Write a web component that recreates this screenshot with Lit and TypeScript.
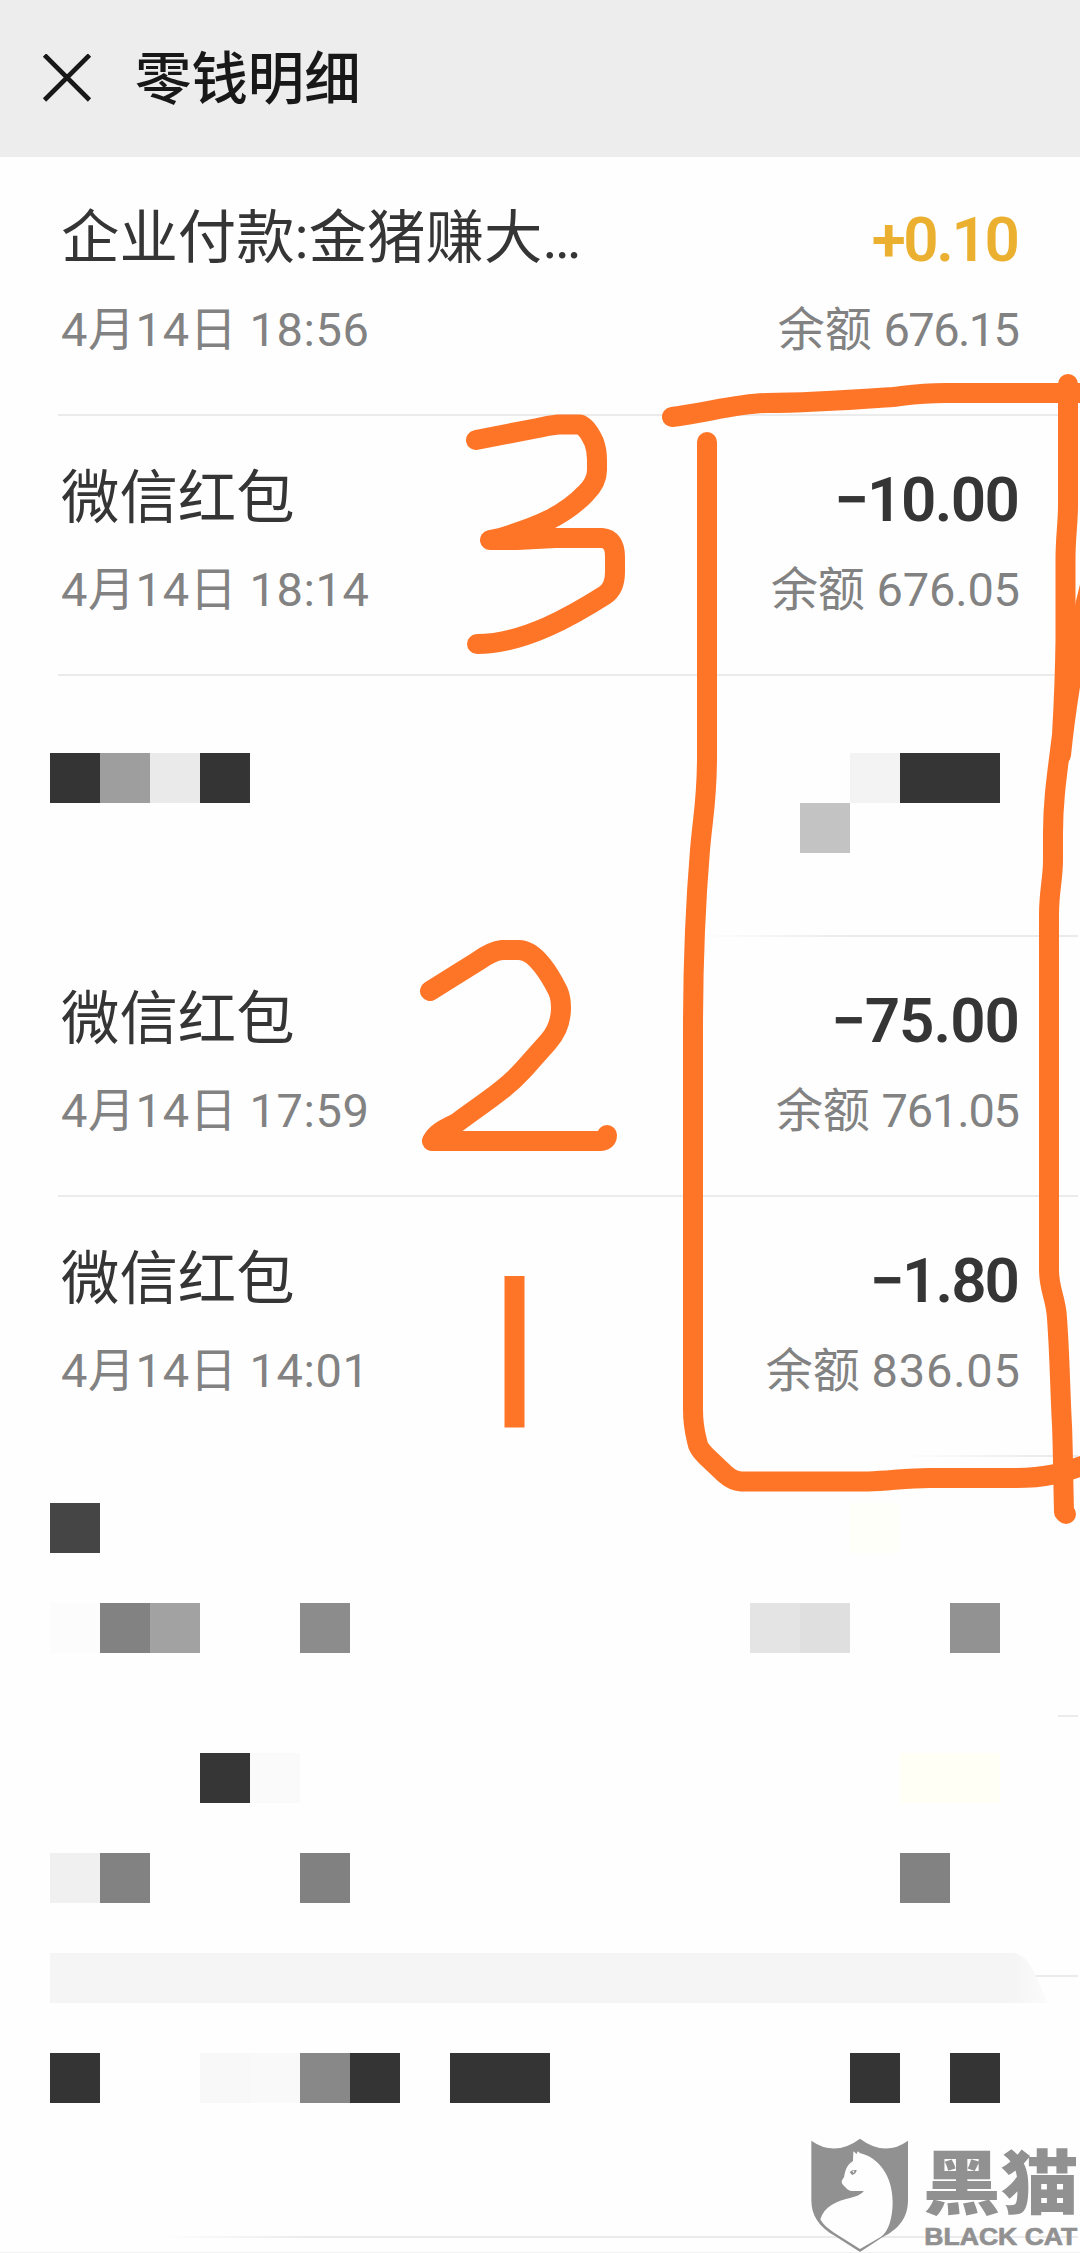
import { LitElement, html, css, svg, nothing } from 'lit';
import { customElement, property } from 'lit/decorators.js';

interface Entry {
  title?: string;
  time?: string;
  amount?: string;
  amountSpacing?: number;
  balance?: string;
  balanceSpacing?: number;
  income?: boolean;
  /** x where the divider under the row begins */
  lineFrom: number;
  /** divider fades in from the left */
  fade?: boolean;
}

const ENTRIES: Entry[] = [
  { title: '企业付款:金猪赚大…', time: '4月14日 18:56', amount: '+0.10', amountSpacing: -2.4, balance: '676.15', balanceSpacing: -1.6, income: true, lineFrom: 58 },
  { title: '微信红包', time: '4月14日 18:14', amount: '−10.00', amountSpacing: -1.6, balance: '676.05', balanceSpacing: -0.2, lineFrom: 58 },
  { lineFrom: 700, fade: true },
  { title: '微信红包', time: '4月14日 17:59', amount: '−75.00', amountSpacing: -1, balance: '761.05', balanceSpacing: -1.2, lineFrom: 58 },
  { title: '微信红包', time: '4月14日 14:01', amount: '−1.80', amountSpacing: -2, balance: '836.05', balanceSpacing: 0.8, lineFrom: 900, fade: true },
  { lineFrom: 1058 },
  { lineFrom: 1030 },
  { lineFrom: 160, fade: true },
];

// Mosaic blocks: column, row (50px grid), span, colour
const BLOCKS: [number, number, number, string][] = [
  [1, 15, 1, '#343434'], [2, 15, 1, '#9e9e9e'], [3, 15, 1, '#eaeaea'], [4, 15, 1, '#343434'],
  [17, 15, 1, '#f3f3f3'], [18, 15, 2, '#353535'], [16, 16, 1, '#c3c3c3'],
  [1, 30, 1, '#454545'], [17, 30, 1, '#fffff9'],
  [1, 32, 1, '#fcfcfc'], [2, 32, 1, '#828282'], [3, 32, 1, '#a2a2a2'], [6, 32, 1, '#8c8c8c'],
  [15, 32, 1, '#e4e4e4'], [16, 32, 1, '#dfdfdf'], [19, 32, 1, '#929292'],
  [4, 35, 1, '#363636'], [5, 35, 1, '#fafafa'], [18, 35, 2, '#fffff6'],
  [1, 37, 1, '#f0f0f0'], [2, 37, 1, '#828282'], [6, 37, 1, '#818181'], [18, 37, 1, '#828282'],
  [1, 41, 1, '#343434'], [4, 41, 1, '#f8f8f8'], [5, 41, 1, '#f9f9f9'], [6, 41, 1, '#888888'],
  [7, 41, 1, '#343434'], [9, 41, 2, '#343434'], [17, 41, 1, '#343434'], [19, 41, 1, '#343434'],
];

@customElement('wallet-entry')
export class WalletEntry extends LitElement {
  @property({ attribute: false }) entry!: Entry;

  static styles = css`
    :host {
      display: flex;
      flex-direction: column;
      box-sizing: border-box;
      height: 260.2px;
    }

    .body {
      flex: 1;
      display: flex;
      justify-content: space-between;
      padding: 42px 60px 0 61px;
    }

    .col {
      display: flex;
      flex-direction: column;
    }

    .col--right {
      align-items: flex-end;
    }

    .title,
    .amount {
      height: 80px;
      line-height: 80px;
      font-size: 58.4px;
      color: #353535;
      white-space: nowrap;
    }

    .amount {
      font-size: 62px;
      font-weight: 600;
      padding-top: 2px;
      height: 78px;
    }

    .amount--income {
      color: #ebb02f;
    }

    .sub {
      margin-top: 22px;
      line-height: 60px;
      font-size: 47px;
      color: #828282;
      white-space: pre;
    }

    .time {
      letter-spacing: 0.6px;
    }

    .divider {
      height: 2px;
      margin-right: 2px;
      background: #ebebeb;
    }

    .divider--fade {
      background: linear-gradient(to right, transparent, #ebebeb 150px);
    }
  `;

  render() {
    const e = this.entry;
    return html`
      <div class="body">${e.title ? this._renderText(e) : nothing}</div>
      <div class="divider ${e.fade ? 'divider--fade' : ''}" style="margin-left:${e.lineFrom}px"></div>
    `;
  }

  _renderText(e: Entry) {
    // the margin cancels the spacing after the last digit
    const spacing = (px = 0) => `letter-spacing:${px}px;margin-right:${-px}px`;
    return html`
      <div class="col">
        <div class="title">${e.title}</div>
        <div class="sub time">${e.time}</div>
      </div>
      <div class="col col--right">
        <div class="amount ${e.income ? 'amount--income' : ''}" style=${spacing(e.amountSpacing)}>${e.amount}</div>
        <div class="sub">余额 <span style=${spacing(e.balanceSpacing)}>${e.balance}</span></div>
      </div>
    `;
  }
}

@customElement('app-root')
export class AppRoot extends LitElement {
  static styles = css`
    :host {
      display: block;
      position: relative;
      width: 1080px;
      height: 2253px;
      overflow: hidden;
      background: #fefefe;
      font-family: Roboto, "Noto Sans CJK SC", sans-serif;
    }

    .header {
      display: flex;
      align-items: center;
      gap: 43px;
      height: 157px;
      box-sizing: border-box;
      padding-left: 42px;
      background: #ededed;
    }

    .close {
      display: block;
      width: 50px;
      height: 50px;
    }

    .heading {
      padding-top: 3px;
      font-size: 56.4px;
      font-weight: 500;
      line-height: 80px;
      color: #181818;
    }

    .list {
      display: flex;
      flex-direction: column;
      margin-top: -1px;
    }

    /* Marks drawn by hand over the list */
    .overlay {
      position: absolute;
      left: 0;
      top: 0;
    }

    .ink {
      fill: none;
      stroke: #ff7527;
      stroke-width: 20;
      stroke-linecap: round;
      stroke-linejoin: round;
    }

    .watermark {
      position: absolute;
      right: 0;
      bottom: 0;
    }

    .brand-zh {
      font-family: "Noto Sans CJK SC", sans-serif;
      font-weight: 900;
      font-size: 212px;
    }

    .brand-en {
      font-family: "Liberation Sans", sans-serif;
      font-weight: 700;
      font-size: 70px;
      stroke: #929192;
      stroke-width: 2;
    }
  `;

  render() {
    return html`
      <div class="header">
        <svg class="close" viewBox="0 0 50 50" fill="none" stroke="#181818" stroke-width="4.6">
          <path d="M2.5 1 L47.5 46 M47.5 1 L2.5 46" />
        </svg>
        <div class="heading">零钱明细</div>
      </div>
      <div class="list">
        ${ENTRIES.map((entry) => html`<wallet-entry .entry=${entry}></wallet-entry>`)}
      </div>
      ${this._renderOverlay()}
      ${this._renderWatermark()}
    `;
  }

  _renderOverlay() {
    return html`
      <svg class="overlay" width="1080" height="2253" viewBox="0 0 1080 2253">
        <defs>
          <linearGradient id="band" x1="0" x2="1">
            <stop offset="0.965" stop-color="#f5f5f5" />
            <stop offset="1" stop-color="#fbfbfb" />
          </linearGradient>
        </defs>
        <path d="M50 1953 H1014 Q1026 1955 1034 1972 L1048 2003 H50 Z" fill="url(#band)" />
        <g shape-rendering="crispEdges">
          ${BLOCKS.map(([col, row, span, fill]) => svg`
            <rect x=${col * 50} y=${row * 50 + 3} width=${span * 50} height="50" fill=${fill} />
          `)}
          <rect x="0" y="2252" width="1080" height="1" fill="#f2f2f2" />
        </g>
        <g class="ink">
          <path d="M672 417 C705 413 740 403 767 403 C810 403 850 400 893 397 C910 395 920 393 945 393 H1095" />
          <path d="M707 442 V757 C707 800 703 815 700 850 C695 910 693 960 693 1030 V1410 C693 1428 696 1436 698 1445 Q700 1450 706 1456 L725 1474 Q733 1481 741 1481.5 H868 C890 1481 905 1478 930 1478 H1015 C1045 1478 1060 1474 1090 1463" />
          <path d="M1068 384 V505 C1068 525 1065.500 535 1065.500 560 V640 C1065 680 1064 700 1062 735 C1057 775 1053 800 1053 833 V860 C1053 880 1049 890 1049 915 V1270 C1049 1290 1056 1298 1057 1318 C1060 1360 1060 1390 1062 1425 C1063 1450 1063 1470 1064 1512 L1066 1514" />
          <path d="M1097 560 C1083 608 1077 645 1071 680 C1067 705 1063 735 1061 755" />
          <path d="M476 440 L538 428 Q548 425.5 558 424.5 H580 Q587 427 594 442 Q597 450 597 460 V470 C597 480 592 487 586 493 C565 515 540 526 500 538 L490 540 H517 L555 538 H602 Q615 539 615 557 V572 C615 583 611 591 605 595 C575 614 525 644 477 644" />
          <path d="M430 991 L478 961 Q492 951 502 950 H519 Q530 950 542 965 Q550 975 558 991 Q561 998 561 1008 C561 1022 557 1032 548 1042 L524 1069 C505 1090 485 1102 458 1122 C448 1128 437 1131 432 1141 H600 Q607 1141 607 1135" />
          <path d="M514.5 1276 V1427.5" stroke-linecap="butt" />
        </g>
      </svg>
    `;
  }

  _renderWatermark() {
    return html`
      <svg class="watermark" width="300" height="143" viewBox="0 0 900 429" fill="#929192">
        <path d="M94 92 Q165 142 240 86 Q315 142 384 92 V270 C384 325 355 358 305 383 L240 426 L165 378 C115 350 94 315 94 270 Z" />
        <path fill="#fefefe" d="M220 124 L230 132 L233 124 L241 130 C296 142 338 200 338 275 C338 325 325 365 302 381 L240 417 L172 374 C142 356 128 342 121 328 C132 290 170 273 210 264 C232 259 248 250 251 243 L215 243 C205 243 202 237 190 226 C181 216 186 210 192 202 C196 183 198 166 219 153 Z" />
        <path d="M209 187 Q215 178 230 180 Q229 192 216 195 Q213 190 209 187 Z" />
        <path fill="#fefefe" d="M217 184 L223 182 L222 190 Z" />
        <text class="brand-zh" x="428" y="296" textLength="468" lengthAdjust="spacingAndGlyphs">黑猫</text>
        <text class="brand-en" x="433" y="406" textLength="459" lengthAdjust="spacingAndGlyphs">BLACK CAT</text>
      </svg>
    `;
  }
}
